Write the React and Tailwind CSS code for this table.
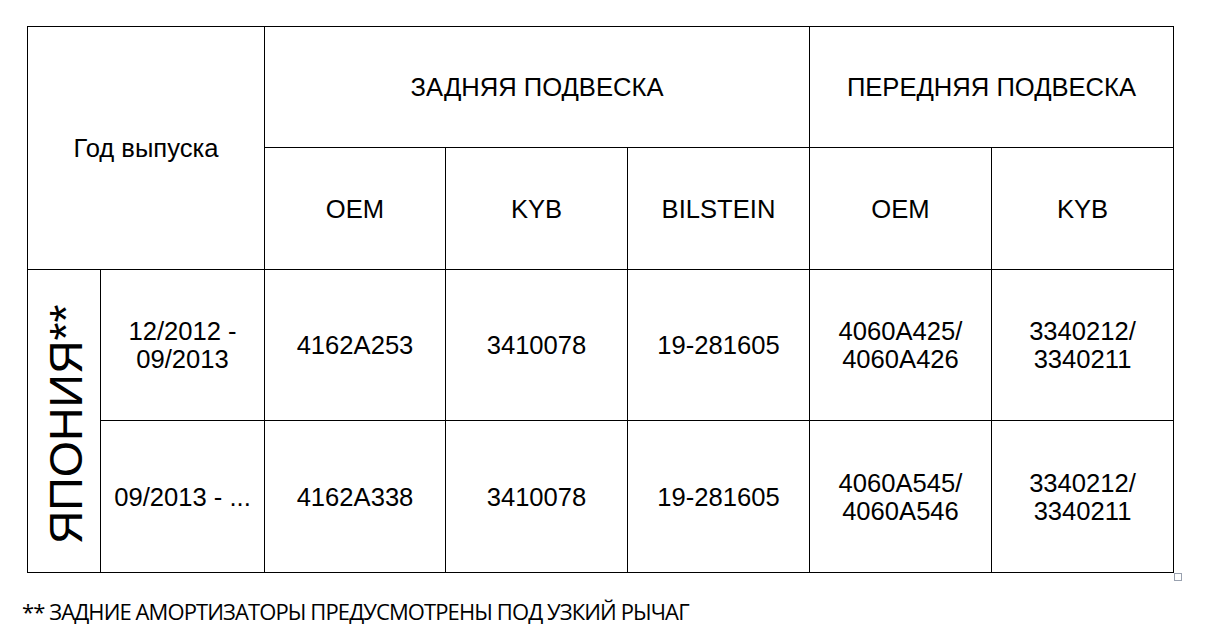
export default function App() {
  const cell =
    "bg-white flex items-center justify-center text-center leading-[28px]";

  const rows = [
    {
      years: ["12/2012 -", "09/2013"],
      oem: ["4162A253"],
      kyb: ["3410078"],
      bil: ["19-281605"],
      foem: ["4060A425/", "4060A426"],
      fkyb: ["3340212/", "3340211"],
    },
    {
      years: ["09/2013 - ..."],
      oem: ["4162A338"],
      kyb: ["3410078"],
      bil: ["19-281605"],
      foem: ["4060A545/", "4060A546"],
      fkyb: ["3340212/", "3340211"],
    },
  ];

  const lines = (arr) =>
    arr.map((t, i) => (
      <span key={i} className="block">
        {t}
      </span>
    ));

  return (
    <div className="w-[1205px] h-[644px] bg-white text-black overflow-hidden">
      <div className="pl-[27px] pt-[26px]">
        <div className="relative w-[1147px]">
          <div className="grid grid-cols-[72px_163px_180px_181px_181px_181px_181px] grid-rows-[120px_121px_150px_151px] gap-px p-px bg-black text-[25.6px] font-['Liberation_Sans',Arial,sans-serif]">
            <div className={`${cell} col-span-2 row-span-2`}>Год выпуска</div>
            <div className={`${cell} col-span-3`}>ЗАДНЯЯ ПОДВЕСКА</div>
            <div className={`${cell} col-span-2`}>ПЕРЕДНЯЯ ПОДВЕСКА</div>
            <div className={cell}>OEM</div>
            <div className={cell}>KYB</div>
            <div className={cell}>BILSTEIN</div>
            <div className={cell}>OEM</div>
            <div className={cell}>KYB</div>

            <div className={`${cell} row-span-2 row-start-3 col-start-1`}>
              <span className="block -rotate-90 translate-x-[2px] translate-y-[3px] whitespace-nowrap text-[46.5px] leading-none">
                ЯПОНИЯ**
              </span>
            </div>

            {rows.map((r, i) => (
              <div key={i} className="contents">
                <div className={cell}>
                  <div>{lines(r.years)}</div>
                </div>
                <div className={cell}>
                  <div>{lines(r.oem)}</div>
                </div>
                <div className={cell}>
                  <div>{lines(r.kyb)}</div>
                </div>
                <div className={cell}>
                  <div>{lines(r.bil)}</div>
                </div>
                <div className={cell}>
                  <div>{lines(r.foem)}</div>
                </div>
                <div className={cell}>
                  <div>{lines(r.fkyb)}</div>
                </div>
              </div>
            ))}
          </div>
          <div className="absolute left-[1147px] top-[547px] w-[8px] h-[8px] border border-gray-400 bg-white"></div>
        </div>
      </div>
      <div className="pl-[22px] pt-[24px] text-[22px] leading-[28px] tracking-[-0.9px] font-['Open_Sans','Noto_Sans',sans-serif]">
        ** ЗАДНИЕ АМОРТИЗАТОРЫ ПРЕДУСМОТРЕНЫ ПОД УЗКИЙ РЫЧАГ
      </div>
    </div>
  );
}
